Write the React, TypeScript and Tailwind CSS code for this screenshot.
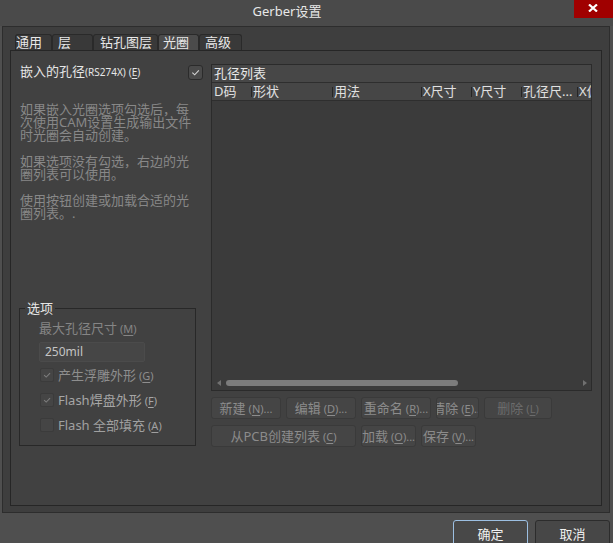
function Acc({ k, tail = '' }: { k: string; tail?: string }) {
    return (
        <span className="text-[11px] ml-[3px]">
            (<span className="underline underline-offset-[2px]">{k}</span>){tail}
        </span>
    )
}

function Tick() {
    return (
        <svg viewBox="0 0 14 14" className="w-full h-full">
            <path d="M3.6 7.1 L6.1 9.5 L10.6 4.7" fill="none" stroke="currentColor" strokeWidth="1.2" />
        </svg>
    )
}

function Btn({ w, dim, children }: { w: string; dim?: boolean; children: React.ReactNode }) {
    return (
        <div
            className={`${w} h-[22px] flex items-center justify-center overflow-hidden whitespace-nowrap rounded-[3px] border border-[#3a3a3a] bg-[#454545] text-[13px] leading-[15px] ${dim ? 'text-[#6c6c6c]' : 'text-[#8c8c8c]'}`}
        >
            {children}
        </div>
    )
}

const tabs = [
    { label: '通用', cls: 'w-[37px] pl-0 bg-[#393939]' },
    { label: '层', cls: 'w-[41px] pl-[5px] bg-[#393939]' },
    { label: '钻孔图层', cls: 'w-[65px] pl-[6px] bg-[#393939]' },
    { label: '光圈', cls: 'w-[41px] pl-[4px] bg-[#4b4b4b]' },
    { label: '高级', cls: 'w-[43px] pl-[5px] bg-[#393939]' },
]

const columns = [
    { label: 'D码', cls: 'w-[39px]', sep: false },
    { label: '形状', cls: 'w-[81px]', sep: true },
    { label: '用法', cls: 'w-[89px]', sep: true },
    { label: 'X尺寸', cls: 'w-[50px]', sep: true },
    { label: 'Y尺寸', cls: 'w-[50px]', sep: true },
    { label: '孔径尺...', cls: 'w-[56px]', sep: true },
    { label: 'X偏移', cls: 'w-[40px]', sep: true },
]

function App() {
    return (
        <div className="w-[613px] h-[543px] overflow-hidden bg-[#4f4f4f] font-['Noto_Sans','Noto_Sans_CJK_SC',sans-serif] select-none">
            {/* title bar */}
            <div className="flex h-[26px] bg-[#4a4a4a]">
                <div className="flex-1 text-center pt-[3px] text-[13px] leading-[16px] text-[#e8e8e8]">Gerber设置</div>
                <div className="w-[39px] h-[18px] bg-[#a00000] flex items-center justify-center pb-[3px] pr-[2px]">
                    <svg viewBox="0 0 10 8" className="w-[10px] h-[8px]">
                        <path d="M1 0.5 L9 7.5 M9 0.5 L1 7.5" stroke="#ffffff" strokeWidth="2.2" />
                    </svg>
                </div>
            </div>

            {/* dialog body */}
            <div className="ml-[2px] w-[608px] h-[487px] border border-[#2d2d2d] bg-[#3e3e3e] pt-[7px] pl-[7px]">
                <div className="flex h-[16px] pl-[5px]">
                    {tabs.map((t) => (
                        <div
                            key={t.label}
                            className={`${t.cls} h-[16px] flex items-center border border-b-0 border-[#2a2a2a] rounded-t-[3px] text-[13px] leading-[15px] text-[#e8e8e8] whitespace-nowrap`}
                        >
                            {t.label}
                        </div>
                    ))}
                </div>

                <div className="w-[592px] h-[456px] border border-[#262626] bg-[#414141] flex">
                    {/* left column */}
                    <div className="w-[200px] flex flex-col">
                        <div className="mt-[13px] ml-[9px] mr-[8px] h-[16px] flex items-center justify-between">
                            <span className="text-[13px] leading-[15px] text-[#e6e6e6] whitespace-nowrap">
                                嵌入的孔径<span className="text-[10px]">(RS274X)</span>
                                <span className="text-[10px] ml-[3px]">
                                    (<span className="underline underline-offset-[2px]">E</span>)
                                </span>
                            </span>
                            <div className="w-[15px] h-[15px] rounded-[3px] border border-[#2b2b2b] bg-[#4a4a4a] text-[#d4d4d4]">
                                <Tick />
                            </div>
                        </div>

                        <div className="mt-[23px] ml-[9px] text-[13px] leading-[13px] text-[#888888] whitespace-nowrap">
                            <p className="mb-[13px]">
                                如果嵌入光圈选项勾选后，每<br />
                                次使用CAM设置生成输出文件<br />
                                时光圈会自动创建。
                            </p>
                            <p className="mb-[13px]">
                                如果选项没有勾选，右边的光<br />
                                圈列表可以使用。
                            </p>
                            <p>
                                使用按钮创建或加载合适的光<br />
                                圈列表。.
                            </p>
                        </div>

                        <fieldset className="mt-[81px] ml-[8px] w-[177px] h-[145px] border border-[#282828]">
                            <legend className="ml-[5px] px-[2px] text-[13px] leading-[15px] text-[#e6e6e6]">选项</legend>
                            <div className="pl-[19px]">
                                <div className="mt-[5px] text-[13px] leading-[15px] text-[#858585] whitespace-nowrap">
                                    最大孔径尺寸<Acc k="M" />
                                </div>
                                <div className="mt-[6px] w-[106px] h-[20px] flex items-center pl-[5px] rounded-[2px] border border-[#4b4b4b] bg-[#464646] text-[12px] text-[#c4c4c4]">
                                    250mil
                                </div>
                                <div className="mt-[6px] ml-[1px] h-[14px] flex items-center gap-[4px]">
                                    <div className="w-[14px] h-[14px] rounded-[2px] border border-[#3b3b3b] bg-[#454545] text-[#7e7e7e]">
                                        <Tick />
                                    </div>
                                    <span className="text-[13px] leading-[14px] text-[#8e8e8e] whitespace-nowrap">
                                        产生浮雕外形<Acc k="G" />
                                    </span>
                                </div>
                                <div className="mt-[11px] ml-[1px] h-[14px] flex items-center gap-[4px]">
                                    <div className="w-[14px] h-[14px] rounded-[2px] border border-[#3b3b3b] bg-[#454545] text-[#7e7e7e]">
                                        <Tick />
                                    </div>
                                    <span className="text-[13px] leading-[14px] text-[#a6a6a6] whitespace-nowrap">
                                        Flash焊盘外形<Acc k="F" />
                                    </span>
                                </div>
                                <div className="mt-[11px] ml-[1px] h-[14px] flex items-center gap-[4px]">
                                    <div className="w-[14px] h-[14px] rounded-[2px] border border-[#3b3b3b] bg-[#454545]" />
                                    <span className="text-[13px] leading-[14px] text-[#a0a0a0] whitespace-nowrap">
                                        Flash 全部填充<Acc k="A" />
                                    </span>
                                </div>
                            </div>
                        </fieldset>
                    </div>

                    {/* right column */}
                    <div className="w-[381px] flex flex-col">
                        <div className="mt-[13px] h-[327px] border border-[#2b2b2b] flex flex-col">
                            <div className="h-[18px] border-b border-[#2e2e2e] bg-[#474747] pl-[2px] flex items-center text-[13px] leading-[15px] text-[#e8e8e8]">
                                孔径列表
                            </div>
                            <div className="h-[18px] border-b border-[#2e2e2e] bg-[#464646] flex items-center overflow-hidden text-[13px] leading-[15px] text-[#e0e0e0] whitespace-nowrap">
                                {columns.map((c) => (
                                    <div key={c.label} className={`${c.cls} shrink-0 flex items-center`}>
                                        {c.sep && <span className="w-[1px] h-[10px] bg-[#262626] mr-[1px]" />}
                                        <span className={c.sep ? '' : 'pl-[2px]'}>{c.label}</span>
                                    </div>
                                ))}
                            </div>
                            <div className="flex-1 bg-[#3b3b3b] flex flex-col justify-end pb-[4px]">
                                <div className="h-[6px] flex items-center pl-[5px] pr-[4px]">
                                    <svg viewBox="0 0 4 6" className="w-[4px] h-[6px]">
                                        <path d="M4 0 L0 3 L4 6 Z" fill="#707070" />
                                    </svg>
                                    <div className="ml-[5px] w-[232px] h-[6px] rounded-full bg-[#7c7c7c]" />
                                    <svg viewBox="0 0 4 6" className="ml-auto w-[4px] h-[6px]">
                                        <path d="M0 0 L4 3 L0 6 Z" fill="#707070" />
                                    </svg>
                                </div>
                            </div>
                        </div>

                        <div className="mt-[6px] flex gap-[5px]">
                            <Btn w="w-[70px]">新建<Acc k="N" tail="..." /></Btn>
                            <Btn w="w-[70px]">编辑<Acc k="D" tail="..." /></Btn>
                            <Btn w="w-[70px]">重命名<Acc k="R" tail="..." /></Btn>
                            <Btn w="w-[43px]">清除<Acc k="E" tail="..." /></Btn>
                            <Btn w="w-[68px]" dim>删除<Acc k="L" /></Btn>
                        </div>
                        <div className="mt-[6px] flex gap-[5px]">
                            <Btn w="w-[145px]">从PCB创建列表<Acc k="C" /></Btn>
                            <Btn w="w-[55px]">加载<Acc k="O" tail="..." /></Btn>
                            <Btn w="w-[55px]">保存<Acc k="V" tail="..." /></Btn>
                        </div>
                    </div>
                </div>
            </div>

            {/* footer */}
            <div className="mt-[7px] pr-[3px] flex justify-end gap-[7px]">
                <div className="w-[75px] h-[28px] rounded-[3px] border border-[#9cbfe2] bg-[#484848] flex items-center justify-center text-[13px] leading-[15px] text-[#f0f0f0]">
                    确定
                </div>
                <div className="w-[75px] h-[28px] rounded-[3px] border border-[#2c2c2c] bg-[#474747] flex items-center justify-center text-[13px] leading-[15px] text-[#f0f0f0]">
                    取消
                </div>
            </div>
        </div>
    )
}

export default App
